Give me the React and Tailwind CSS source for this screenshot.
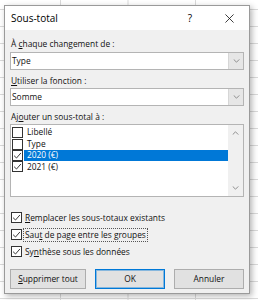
function Box({ checked }) {
  return (
    <span className="flex h-[11px] w-[11px] shrink-0 items-center justify-center border border-[#333] bg-white">
      {checked && (
        <svg viewBox="0 0 10 10" className="h-[9px] w-[9px]">
          <path d="M1.2 5.2 L3.9 7.8 L8.8 2.2" fill="none" stroke="#222" strokeWidth="1" />
        </svg>
      )}
    </span>
  )
}

function Chevron({ up }) {
  return (
    <svg viewBox="0 0 8 5" className="h-[4px] w-[7px]">
      <path d={up ? 'M0.5 4.5 L4 1 L7.5 4.5' : 'M0.5 0.5 L4 4 L7.5 0.5'} fill="none" stroke="#777" strokeWidth="1" />
    </svg>
  )
}

function Select({ value }) {
  return (
    <div className="flex h-[18px] items-stretch border border-[#b4b4b4] bg-white">
      <span className="flex flex-1 items-center pl-[1px]">{value}</span>
      <span className="flex w-[15px] items-center justify-center border-l border-[#d6d6d6] bg-[#e6e6e6]">
        <Chevron />
      </span>
    </div>
  )
}

function ListRow({ label, checked, selected }) {
  return (
    <div className="flex h-[11.4px] items-center">
      <span className="ml-[1px]"><Box checked={checked} /></span>
      <span className={`ml-[1px] flex h-full flex-1 items-center pl-[3px] ${selected ? 'bg-[#0078d7] text-white' : ''}`}>
        {label}
      </span>
    </div>
  )
}

function Option({ children, checked, focus }) {
  return (
    <div className="flex h-[17px] items-center pl-[1px]">
      <Box checked={checked} />
      <span className={`ml-[2px] px-[1px] leading-[12px] ${focus ? 'outline-1 outline-dotted outline-[#555]' : ''}`}>
        {children}
      </span>
    </div>
  )
}

function Button({ children, width, primary }) {
  return (
    <button className={`flex h-[20px] items-center justify-center bg-[#e1e1e1] ${width} ${primary ? 'border border-[#0078d7] ring-1 ring-inset ring-[#0078d7]/40' : 'border border-[#adadad]'}`}>
      {children}
    </button>
  )
}

export default function App() {
  return (
    <div className="h-[300px] w-[258px] overflow-hidden bg-white pl-[4px] pt-[5px] font-['Open_Sans',sans-serif] text-[8.4px] text-[#111] [background-image:linear-gradient(to_right,#dadada_1px,transparent_1px),linear-gradient(to_bottom,#dadada_1px,transparent_1px)] [background-position:60px_9px] [background-size:67.5px_17px]">
      <div className="flex h-[289px] w-[246px] flex-col border border-[#9a9a9a] bg-[#f0f0f0] shadow-[2px_2px_6px_rgba(0,0,0,0.3)]">
        <div className="flex h-[24px] items-center bg-white pl-[6px]">
          <span className="text-[10px] text-black">Sous-total</span>
          <span className="ml-auto flex w-[38px] justify-center text-[10px] text-black">?</span>
          <span className="flex w-[40px] justify-center">
            <svg viewBox="0 0 10 10" className="h-[9px] w-[9px]">
              <path d="M0.5 0.5 L9.5 9.5 M9.5 0.5 L0.5 9.5" stroke="#111" strokeWidth="0.9" />
            </svg>
          </span>
        </div>

        <div className="flex flex-1 flex-col px-[5px] pt-[8px]">
          <div className="h-[12px] leading-[12px] pl-[1px]">À <span className="underline">c</span>haque changement de :</div>
          <div className="mt-[2px]"><Select value="Type" /></div>

          <div className="mt-[5px] h-[12px] leading-[12px] pl-[1px]"><span className="underline">U</span>tiliser la fonction :</div>
          <div className="mt-[1px]"><Select value="Somme" /></div>

          <div className="mt-[5px] h-[12px] leading-[12px] pl-[1px]">Aj<span className="underline">o</span>uter un sous-total à :</div>
          <div className="mt-[1px] flex h-[73px] border border-[#b4b4b4] bg-white">
            <div className="flex-1 pt-[2px]">
              <ListRow label="Libellé" />
              <ListRow label="Type" />
              <ListRow label="2020 (€)" checked selected />
              <ListRow label="2021 (€)" checked />
            </div>
            <div className="flex w-[15px] flex-col items-center justify-between bg-[#f0f0f0] py-[6px]">
              <Chevron up />
              <Chevron />
            </div>
          </div>

          <div className="mt-[12px]">
            <Option checked><span className="underline">R</span>emplacer les sous-totaux existants</Option>
            <Option checked focus>Sau<span className="underline">t</span> de page entre les groupes</Option>
            <Option checked>Sy<span className="underline">n</span>thèse sous les données</Option>
          </div>

          <div className="mt-[9px] flex gap-[9px]">
            <Button width="w-[76px]"><span><span className="underline">S</span>upprimer tout</span></Button>
            <Button width="w-[70px]" primary>OK</Button>
            <Button width="w-[70px]">Annuler</Button>
          </div>
        </div>
      </div>
    </div>
  )
}
